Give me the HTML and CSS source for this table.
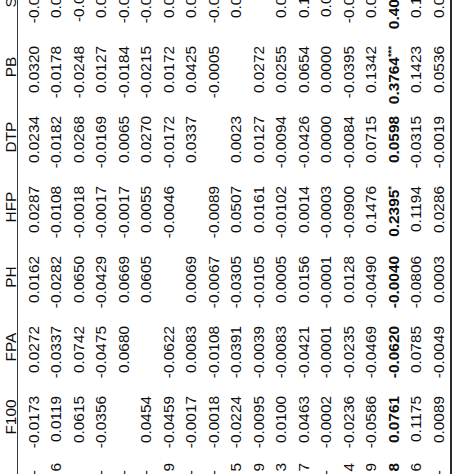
FILE: index.html
```html
<!DOCTYPE html>
<html>
<head>
<meta charset="utf-8">
<link rel="stylesheet" href="styles.css">
</head>
<body>
<div class="viewport">
  <div class="rot">
    <div class="table">
      <div class="head">
        <div class="lab"></div>
        <div class="h"><span>F100</span></div>
        <div class="h"><span>FPA</span></div>
        <div class="h"><span>PH</span></div>
        <div class="h"><span>HFP</span></div>
        <div class="h"><span>DTP</span></div>
        <div class="h"><span>PB</span></div>
        <div class="h"><span>SPX</span></div>
      </div>
      <div class="body">
        <div class="row"><div class="lab s">Lag 1 -</div><div>-0.0173</div><div>0.0272</div><div>0.0162</div><div>0.0287</div><div>0.0234</div><div>0.0320</div><div>-0.0148</div></div>
        <div class="row"><div class="lab">Lag 6</div><div>0.0119</div><div>-0.0337</div><div>-0.0282</div><div>-0.0108</div><div>-0.0182</div><div>-0.0178</div><div>0.0093</div></div>
        <div class="row"><div class="lab"></div><div>0.0615</div><div>0.0742</div><div>0.0650</div><div>-0.0018</div><div>0.0268</div><div>-0.0248</div><div>-0.0311</div></div>
        <div class="row"><div class="lab s">Lag 2 -</div><div>-0.0356</div><div>-0.0475</div><div>-0.0429</div><div>-0.0017</div><div>-0.0169</div><div>0.0127</div><div>0.0256</div></div>
        <div class="row"><div class="lab s">F100 -</div><div></div><div>0.0680</div><div>0.0669</div><div>-0.0017</div><div>0.0065</div><div>-0.0184</div><div>-0.0072</div></div>
        <div class="row"><div class="lab s">FPA -</div><div>0.0454</div><div></div><div>0.0605</div><div>0.0055</div><div>0.0270</div><div>-0.0215</div><div>-0.0189</div></div>
        <div class="row"><div class="lab">PH 9</div><div>-0.0459</div><div>-0.0622</div><div></div><div>-0.0046</div><div>-0.0172</div><div>0.0172</div><div>0.0034</div></div>
        <div class="row"><div class="lab s">HFP -</div><div>-0.0017</div><div>0.0083</div><div>0.0069</div><div></div><div>0.0337</div><div>0.0425</div><div>0.0417</div></div>
        <div class="row"><div class="lab s">DTP -</div><div>-0.0018</div><div>-0.0108</div><div>-0.0067</div><div>-0.0089</div><div></div><div>-0.0005</div><div>-0.0263</div></div>
        <div class="row"><div class="lab">PB 5</div><div>-0.0224</div><div>-0.0391</div><div>-0.0305</div><div>0.0507</div><div>0.0023</div><div></div><div>0.0051</div></div>
        <div class="row"><div class="lab">SPX 9</div><div>-0.0095</div><div>-0.0039</div><div>-0.0105</div><div>0.0161</div><div>0.0127</div><div>0.0272</div><div></div></div>
        <div class="row"><div class="lab">Lag 3</div><div>0.0100</div><div>-0.0083</div><div>0.0005</div><div>-0.0102</div><div>-0.0094</div><div>0.0255</div><div>0.0398</div></div>
        <div class="row"><div class="lab">Lag 7</div><div>0.0463</div><div>-0.0421</div><div>0.0156</div><div>0.0014</div><div>-0.0426</div><div>0.0654</div><div>0.1027</div></div>
        <div class="row"><div class="lab s">Lag 1 -</div><div>-0.0002</div><div>-0.0001</div><div>-0.0001</div><div>-0.0003</div><div>0.0000</div><div>0.0000</div><div>0.0112</div></div>
        <div class="row"><div class="lab">Lag 4</div><div>-0.0236</div><div>-0.0235</div><div>0.0128</div><div>-0.0900</div><div>-0.0084</div><div>-0.0395</div><div>-0.0342</div></div>
        <div class="row"><div class="lab">Lag 9</div><div>-0.0586</div><div>-0.0469</div><div>-0.0490</div><div>0.1476</div><div>0.0715</div><div>0.1342</div><div>0.0876</div></div>
        <div class="row b"><div class="lab">Lag 8</div><div>0.0761</div><div>-0.0620</div><div>-0.0040</div><div>0.2395<sup>*</sup></div><div>0.0598</div><div>0.3764<sup>***</sup></div><div>0.4012<sup>***</sup></div></div>
        <div class="row"><div class="lab">Lag 6</div><div>0.1175</div><div>0.0785</div><div>-0.0806</div><div>0.1194</div><div>-0.0315</div><div>0.1423</div><div>0.1309</div></div>
        <div class="row"><div class="lab s">Lag 5 -</div><div>0.0089</div><div>-0.0049</div><div>0.0003</div><div>0.0286</div><div>-0.0019</div><div>0.0536</div><div>0.0471</div></div>
      </div>
    </div>
  </div>
</div>
</body>
</html>
```

FILE: styles.css
```css
html, body {
  margin: 0;
  padding: 0;
  background: #ffffff;
}

.viewport {
  width: 474px;
  height: 474px;
  overflow: hidden;
  background: #ffffff;
}

.rot {
  width: 474px;
  height: 474px;
  transform: rotate(-90deg);
}

.table {
  margin-left: -69px;
  width: 572px;
  font-family: "Liberation Sans", Arial, sans-serif;
  font-size: 15.4px;
  color: #0d0d0d;
}

.head,
.row {
  display: grid;
  grid-template-columns: 80px 67px 70px 70px 70px 70px 70px 75px;
}

.head {
  height: 17.3px;
  line-height: 22.7px;
}

.h {
  display: flex;
  justify-content: flex-end;
}

.h span {
  width: 42px;
  text-align: center;
  white-space: nowrap;
}

.body {
  border-top: 1.7px solid #3a3a3a;
  border-bottom: 2px solid #2a2a2a;
  padding-top: 4.4px;
}

.row {
  height: 22.53px;
  line-height: 22.53px;
}

.row > div {
  text-align: right;
  white-space: nowrap;
}

.row > .lab.s {
  padding-right: 7px;
}

.b {
  font-weight: bold;
}

sup {
  font-size: 9.5px;
  line-height: 0;
  vertical-align: 5px;
}
```
